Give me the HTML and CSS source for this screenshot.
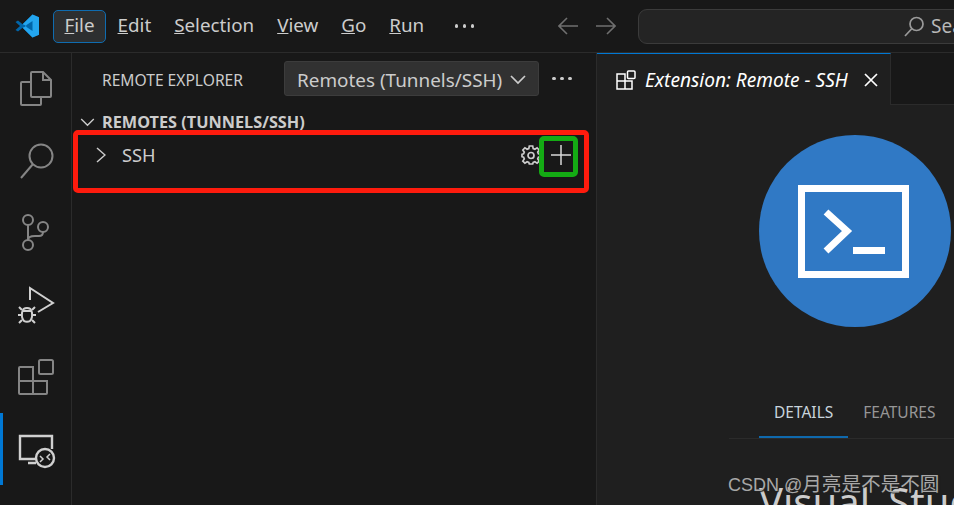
FILE: index.html
```html
<!DOCTYPE html>
<html lang="en">
<head>
    <meta charset="UTF-8">
    <title>Extension: Remote - SSH</title>
    <link rel="stylesheet" href="styles.css">
</head>
<body>

<header class="titlebar">
    <svg class="logo" viewBox="0 0 24 24">
        <path class="logo-dark" d="M17.5 0.5 7.6 10.2 3 6.6 0.5 7.9 5 12 0.5 16.1 3 17.4 7.6 13.8 17.5 23.5 24 20.8V3.2Z"/>
        <path class="logo-light" d="M17.5 0.5 24 3.2V20.8L17.5 23.5V7L10 12 17.5 17V23.5L7.6 13.8 12 12 7.6 10.2Z"/>
    </svg>
    <nav class="menu">
        <span class="menu-item active"><u>F</u>ile</span>
        <span class="menu-item"><u>E</u>dit</span>
        <span class="menu-item"><u>S</u>election</span>
        <span class="menu-item"><u>V</u>iew</span>
        <span class="menu-item"><u>G</u>o</span>
        <span class="menu-item"><u>R</u>un</span>
        <span class="menu-dots"><i></i><i></i><i></i></span>
    </nav>
    <div class="history">
        <svg class="nav-arrow" viewBox="0 0 20 20"><path d="M20 10H1M9 2 1 10l8 8"/></svg>
        <svg class="nav-arrow" viewBox="0 0 20 20"><path d="M0 10H19M11 2l8 8-8 8"/></svg>
    </div>
    <div class="search">
        <svg class="search-icon" viewBox="0 0 20 20"><circle cx="12.5" cy="7.5" r="6.5"/><path d="M8 12 1 19.5"/></svg>
        <span>Search</span>
    </div>
</header>

<div class="workbench">
    <aside class="activity">
        <div class="activity-item">
            <svg class="act-icon" viewBox="0 0 40 40">
                <path d="M16 3H27L35 11V27A1 1 0 0 1 34 28H16A1 1 0 0 1 15 27V4A1 1 0 0 1 16 3Z"/>
                <path d="M27 4V11H34"/>
                <path d="M15 13H6A1 1 0 0 0 5 14V35A1 1 0 0 0 6 36H24A1 1 0 0 0 25 35V28"/>
            </svg>
        </div>
        <div class="activity-item">
            <svg class="act-icon" viewBox="0 0 40 40">
                <circle cx="25" cy="15" r="11.5"/>
                <path d="M17 23 5 37"/>
            </svg>
        </div>
        <div class="activity-item">
            <svg class="act-icon" viewBox="0 0 40 40">
                <circle cx="12" cy="7" r="5"/>
                <circle cx="27" cy="14" r="5"/>
                <circle cx="12" cy="32" r="5"/>
                <path d="M12 12V27M27 19C27 22 25 23 23 23H19C15 23 12 24 12 27"/>
            </svg>
        </div>
        <div class="activity-item">
            <svg class="act-icon bright" viewBox="0 0 40 40">
                <path d="M14 15V3L37 18 22 27"/>
                <path d="M7 25.500C7 22 15 22 15 25.500C16.500 27 16.500 33 15 34.500C14 37.500 8 37.500 7 34.500C5.500 33 5.500 27 7 25.500ZM7 26H15"/>
                <path d="M3 22 6 25M19 22 16 25M2 30H6M16 30H20M3 38 6 35M19 38 16 35"/>
            </svg>
        </div>
        <div class="activity-item">
            <svg class="act-icon" viewBox="0 0 40 40">
                <rect x="23" y="3" width="14" height="14" rx="1.5"/>
                <path d="M17 24V10H4A1 1 0 0 0 3 11V36A1 1 0 0 0 4 37H30A1 1 0 0 0 31 36V24Z"/>
                <path d="M3 24H17V37"/>
            </svg>
        </div>
        <div class="activity-item current">
            <svg class="act-icon bright heavy" viewBox="0 0 40 40">
                <path d="M36 20V7H4V30H20M12 34H20"/>
                <circle cx="29" cy="29" r="9"/>
                <path class="thin" d="M24 27 27 30 24 33M34 25 31 28 34 31"/>
            </svg>
        </div>
    </aside>

    <section class="sidebar">
        <div class="side-head">
            <span class="side-title">REMOTE EXPLORER</span>
            <div class="picker">
                <span>Remotes (Tunnels/SSH)</span>
                <svg class="chev-down" viewBox="0 0 16 10"><path d="M1 1 8 8 15 1"/></svg>
            </div>
            <span class="menu-dots small"><i></i><i></i><i></i></span>
        </div>
        <div class="pane-head">
            <svg class="chev-pane" viewBox="0 0 16 10"><path d="M1 1 8 8 15 1"/></svg>
            <span>REMOTES (TUNNELS/SSH)</span>
        </div>
        <div class="tree-row">
            <svg class="chev-right" viewBox="0 0 10 16"><path d="M1 1 9 8 1 15"/></svg>
            <span class="tree-label">SSH</span>
            <svg class="gear" viewBox="0 0 20 20">
                <path d="M8.3 1H11.7L12.2 3.6 13.9 4.3 16.1 2.8 18.2 5 16.7 7.2 17.4 8.9 19 9.3V11.7L17.4 12.2 16.7 13.9 18.2 16.1 16.1 18.2 13.9 16.7 12.2 17.4 11.7 19H8.3L7.8 17.4 6.1 16.7 3.9 18.2 1.8 16.1 3.3 13.9 2.6 12.2 1 11.7V9.3L2.6 8.9 3.3 7.2 1.8 5 3.9 2.8 6.1 4.3 7.8 3.6Z"/>
                <circle cx="10" cy="10.5" r="3"/>
            </svg>
            <svg class="plus" viewBox="0 0 20 20"><path d="M10 0V20M0 10H20"/></svg>
        </div>
        <div class="mark-red"></div>
        <div class="mark-green"></div>
    </section>

    <main class="editor">
        <div class="tabs">
            <div class="tab">
                <svg class="tab-icon" viewBox="0 0 20 20">
                    <rect x="11.5" y="1" width="7.5" height="7.5" rx="1"/>
                    <path d="M9 11V4H1V19H16V11ZM1 11H9V19"/>
                </svg>
                <span class="tab-label">Extension: Remote - SSH</span>
                <svg class="tab-close" viewBox="0 0 14 14"><path d="M1 1 13 13M13 1 1 13"/></svg>
            </div>
        </div>
        <div class="ext-page">
            <div class="ext-badge">
                <svg class="ext-logo" viewBox="0 0 111 93">
                    <rect x="3.500" y="3.500" width="104" height="86"/>
                    <path d="M28 27 49 46 28 66"/>
                    <path d="M55 65.500H87"/>
                </svg>
            </div>
            <div class="ext-nav">
                <span class="ext-link on">DETAILS</span>
                <span class="ext-link">FEATURES</span>
            </div>
            <div class="ext-name">Visual Studio Code Remote - SSH</div>
        </div>
    </main>
</div>

<div class="watermark"><span class="watermark-latin">CSDN @</span>月亮是不是不圆</div>

</body>
</html>
```
FILE: styles.css
```css
body {
    margin: 0;
    width: 954px;
    height: 505px;
    overflow: hidden;
    position: relative;
    background-color: #181818;
    color: #cccccc;
    font-family: "Noto Sans", "Open Sans", sans-serif;
    display: flex;
    flex-direction: column;
}
svg {
    display: block;
    flex-shrink: 0;
    fill: none;
}

/* title bar */
.titlebar {
    height: 53px;
    flex-shrink: 0;
    display: flex;
    align-items: center;
    box-sizing: border-box;
    border-bottom: 1px solid #2b2b2b;
    padding-left: 15px;
}
.logo {
    width: 24px;
    height: 24px;
    margin-right: 14px;
}
.logo-dark { fill: #0065a9; }
.logo-light { fill: #23a5ee; }
.menu {
    display: flex;
    align-items: center;
    width: 505px;
    flex-shrink: 0;
}
.menu-item {
    font-size: 18.8px;
    line-height: 29px;
    padding: 0 10.5px 2px;
    border: 1px solid transparent;
    border-radius: 5px;
    white-space: nowrap;
}
.menu-item.active {
    background-color: #2d2f30;
    border-color: #0f6cb0;
}
.menu-dots {
    display: flex;
    gap: 4.500px;
    margin-left: 19px;
}
.menu-dots i {
    width: 3.500px;
    height: 3.500px;
    border-radius: 50%;
    background-color: #cccccc;
}
.menu-dots.small {
    margin-left: 13px;
}
.history {
    display: flex;
    gap: 18px;
    width: 80px;
    flex-shrink: 0;
}
.nav-arrow {
    width: 20px;
    height: 20px;
    stroke: #6f6f6f;
    stroke-width: 1.600;
}
.search {
    width: 500px;
    height: 35px;
    flex-shrink: 0;
    box-sizing: border-box;
    background-color: #242424;
    border: 1px solid #3b3b3b;
    border-radius: 9px;
    display: flex;
    align-items: center;
    padding-left: 265px;
    font-size: 19px;
    color: #b8b8b8;
    white-space: nowrap;
}
.search-icon {
    width: 20px;
    height: 21px;
    margin-right: 7px;
    stroke: #9a9a9a;
    stroke-width: 1.700;
}

.workbench {
    flex: 1;
    display: flex;
    min-height: 0;
}

/* activity bar */
.activity {
    width: 72px;
    flex-shrink: 0;
    box-sizing: border-box;
    border-right: 1px solid #2b2b2b;
}
.activity-item {
    height: 72px;
    display: flex;
    align-items: center;
    padding-left: 16px;
    box-sizing: border-box;
}
.activity-item.current {
    border-left: 3px solid #0078d4;
    padding-left: 13px;
}
.act-icon {
    width: 40px;
    height: 40px;
    stroke: #858585;
    stroke-width: 2;
}
.act-icon.bright {
    stroke: #d0d0d0;
}
.act-icon.heavy {
    stroke-width: 2.400;
}
.act-icon .thin {
    stroke-width: 1.500;
}

/* side bar */
.sidebar {
    width: 525px;
    flex-shrink: 0;
    box-sizing: border-box;
    border-right: 1px solid #2b2b2b;
    position: relative;
}
.side-head {
    display: flex;
    align-items: center;
    height: 51px;
    padding-left: 30px;
}
.side-title {
    width: 182px;
    flex-shrink: 0;
    font-size: 15.6px;
    padding-top: 2px;
    white-space: nowrap;
}
.picker {
    width: 255px;
    height: 35px;
    flex-shrink: 0;
    box-sizing: border-box;
    background-color: #313131;
    border: 1px solid #3c3c3c;
    border-radius: 3px;
    display: flex;
    align-items: center;
    justify-content: space-between;
    padding: 2px 12px 0;
    font-size: 18.9px;
    white-space: nowrap;
}
.chev-down {
    width: 16px;
    height: 10px;
    stroke: #cccccc;
    stroke-width: 1.700;
}
.pane-head {
    display: flex;
    align-items: center;
    height: 36px;
    font-size: 16.3px;
    font-weight: 700;
    white-space: nowrap;
}
.chev-pane {
    width: 15px;
    height: 9px;
    margin: 0 7px 0 8px;
    stroke: #cccccc;
    stroke-width: 1.500;
}
.tree-row {
    display: flex;
    align-items: center;
    height: 30px;
    padding-left: 24px;
}
.chev-right {
    width: 10px;
    height: 16px;
    margin-right: 16px;
    stroke: #cccccc;
    stroke-width: 1.500;
}
.tree-label {
    font-size: 18.3px;
    flex: 1;
    padding-bottom: 2px;
}
.gear {
    width: 20px;
    height: 20px;
    stroke: #cccccc;
    stroke-width: 1.700;
    margin-right: 10px;
}
.plus {
    width: 20px;
    height: 20px;
    margin-right: 25px;
    stroke: #d8d8d8;
    stroke-width: 1.500;
}

/* screenshot annotations drawn over the tree */
.mark-red {
    position: absolute;
    left: 1px;
    top: 77px;
    width: 516px;
    height: 63px;
    box-sizing: border-box;
    border: 5px solid #fe1b0d;
    border-radius: 5px;
}
.mark-green {
    position: absolute;
    left: 467px;
    top: 83px;
    width: 39px;
    height: 41px;
    box-sizing: border-box;
    border: 5px solid #14ab14;
    border-radius: 5px;
}

/* editor */
.editor {
    flex: 1;
    min-width: 0;
    background-color: #1f1f1f;
    overflow: hidden;
}
.tabs {
    height: 52px;
    box-sizing: border-box;
    background-color: #181818;
    border-bottom: 1px solid #2b2b2b;
}
.tab {
    width: 294px;
    height: 52px;
    box-sizing: border-box;
    background-color: #1f1f1f;
    border-top: 1px solid #0078d4;
    border-right: 1px solid #2b2b2b;
    display: flex;
    align-items: center;
    padding-left: 19px;
    color: #ffffff;
}
.tab-icon {
    width: 20px;
    height: 20px;
    margin-right: 9px;
    stroke: #ffffff;
    stroke-width: 1.500;
}
.tab-label {
    font-size: 19.1px;
    font-style: italic;
    white-space: nowrap;
    width: 219px;
    flex-shrink: 0;
}
.tab-close {
    width: 14px;
    height: 14px;
    stroke: #ffffff;
    stroke-width: 1.700;
}
.ext-page {
    padding: 30px 0 0 132px;
}
.ext-badge {
    width: 192px;
    height: 192px;
    margin-left: 30px;
    border-radius: 50%;
    background-color: #3079c5;
    display: flex;
    align-items: center;
    justify-content: center;
}
.ext-logo {
    width: 111px;
    height: 93px;
    margin-right: 3px;
    stroke: #ffffff;
    stroke-width: 7;
}
.ext-nav {
    display: flex;
    height: 46px;
    margin-top: 65px;
    border-bottom: 1px solid #2b2b2b;
    width: 300px;
    font-size: 15.5px;
    padding-left: 30px;
    box-sizing: content-box;
}
.ext-link {
    padding: 0 15px;
    line-height: 40px;
    color: #969696;
    white-space: nowrap;
}
.ext-link.on {
    color: #c8d4dc;
    height: 46px;
    box-sizing: border-box;
    border-bottom: 2px solid #0f69ad;
    margin-bottom: -1px;
}
.ext-name {
    margin: 36px 0 0 30px;
    font-size: 40px;
    word-spacing: 8px;
    line-height: 54px;
    white-space: nowrap;
    color: #cccccc;
}

.watermark {
    position: absolute;
    left: 728px;
    top: 471px;
    font-family: "Liberation Sans", "Noto Sans CJK SC", sans-serif;
    font-size: 19.6px;
    line-height: 26px;
    color: #a8a8a8;
    text-shadow: 1px 1px 1px #222222;
    white-space: nowrap;
}
.watermark-latin {
    font-size: 18px;
}
```
